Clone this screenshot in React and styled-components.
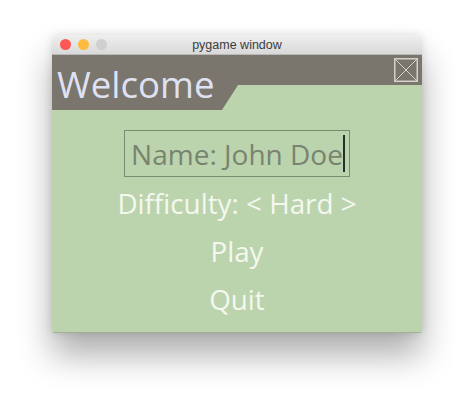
import React from 'react';
import styled, { createGlobalStyle } from 'styled-components';

const Global = createGlobalStyle`
  html, body { margin: 0; padding: 0; background: #ffffff; }
  body { font-family: "Open Sans", "Liberation Sans", sans-serif; }
`;

const Page = styled.div`
  width: 474px;
  height: 401px;
  padding: 35px 0 0 52px;
  box-sizing: border-box;
  overflow: hidden;
`;

const Window = styled.div`
  width: 370px;
  height: 298px;
  display: flex;
  flex-direction: column;
  border-radius: 5px 5px 2px 2px;
  overflow: hidden;
  box-shadow: 0 22px 34px rgba(0, 0, 0, 0.32), 0 0 8px rgba(0, 0, 0, 0.12);
`;

const Titlebar = styled.div`
  height: 20px;
  flex: none;
  display: flex;
  align-items: center;
  position: relative;
  padding-left: 8px;
  gap: 7px;
  background: linear-gradient(#efefef, #d9d9d9);
  border-bottom: 1px solid #b9b9b9;
  box-sizing: border-box;
`;

const Light = styled.span`
  width: 11px;
  height: 11px;
  border-radius: 50%;
  background: ${(p) => p.$color};
`;

const Caption = styled.div`
  position: absolute;
  left: 0;
  right: 0;
  text-align: center;
  font-family: "Liberation Sans", Arial, sans-serif;
  font-size: 12.5px;
  color: #3c3c3c;
`;

const Content = styled.div`
  flex: 1;
  display: flex;
  flex-direction: column;
  background: #bbd4ae;
  border-bottom: 1px solid #a3ae9a;
`;

const Header = styled.div`
  height: 55px;
  flex: none;
  display: flex;
  justify-content: space-between;
  align-items: flex-start;
  padding: 2px 4px 0 5px;
  box-sizing: border-box;
  background: #7a756d;
  clip-path: polygon(0 0, 100% 0, 100% 30px, 186px 30px, 170px 100%, 0 100%);
`;

const Heading = styled.div`
  font-size: 36.6px;
  line-height: 55px;
  color: #dfe1f3;
`;

const CloseButton = styled.svg`
  width: 24px;
  height: 24px;
  margin-top: 1px;
  display: block;
`;

const Menu = styled.div`
  display: flex;
  flex-direction: column;
  align-items: center;
  padding-top: 20px;
`;

const NameField = styled.div`
  width: 226px;
  height: 47px;
  margin-bottom: 2px;
  padding-left: 2px;
  box-sizing: border-box;
  display: flex;
  align-items: center;
  justify-content: center;
  border: 1px solid #7b8c72;
  font-size: 28px;
  color: #78846f;
`;

const Caret = styled.span`
  width: 2px;
  height: 37px;
  background: #27312a;
`;

const MenuItem = styled.div`
  height: 48px;
  display: flex;
  align-items: center;
  font-size: 27.8px;
  color: #f4f8ee;
`;

export default function App() {
  return (
    <Page>
      <Global />
      <Window>
        <Titlebar>
          <Light $color="#fc5753" />
          <Light $color="#fdbc40" />
          <Light $color="#cfcfcf" />
          <Caption>pygame window</Caption>
        </Titlebar>
        <Content>
          <Header>
            <Heading>Welcome</Heading>
            <CloseButton viewBox="0 0 24 24">
              <rect x="0.75" y="0.75" width="22.5" height="22.5" fill="none" stroke="#d4d1cd" strokeWidth="1.5" />
              <path d="M1 1 L23 23 M23 1 L1 23" stroke="#d4d1cd" strokeWidth="1" />
            </CloseButton>
          </Header>
          <Menu>
            <NameField>
              Name: John Doe
              <Caret />
            </NameField>
            <MenuItem>Difficulty: &lt; Hard &gt;</MenuItem>
            <MenuItem>Play</MenuItem>
            <MenuItem>Quit</MenuItem>
          </Menu>
        </Content>
      </Window>
    </Page>
  );
}
